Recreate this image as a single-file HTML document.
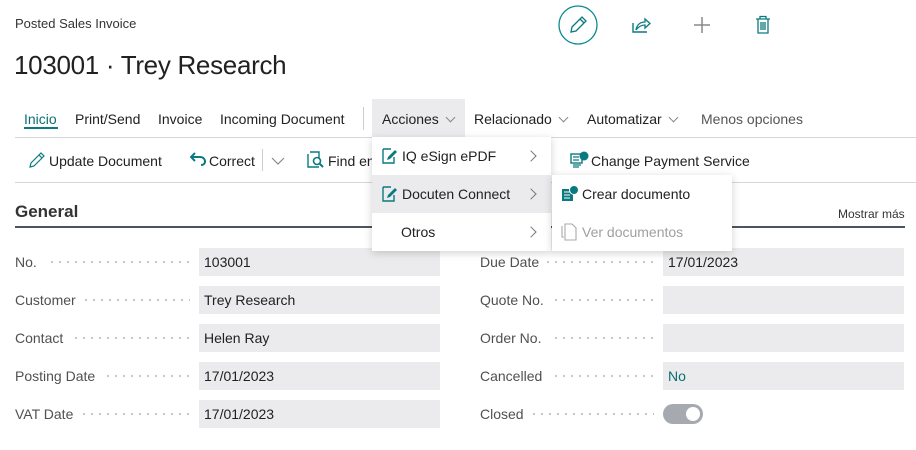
<!DOCTYPE html>
<html><head><meta charset="utf-8"><style>
*{margin:0;padding:0;box-sizing:border-box}
body{width:916px;height:450px;background:#fff;font-family:"Segoe UI","Liberation Sans",sans-serif;color:#212121;position:relative;overflow:hidden;font-size:14px}
.a{position:absolute;white-space:nowrap}
.lbl{position:absolute;color:#505050;font-size:14px;display:flex;align-items:center;height:28px}
.dots{position:absolute;height:28px;background:radial-gradient(circle,#bbb 0.8px,transparent 1.2px) 0 50%/8px 8px repeat-x}
.box{position:absolute;background:#ebebed;height:28px;padding-left:5px;display:flex;align-items:center;font-size:14px;color:#212121}
.menu{position:absolute;background:#fff;box-shadow:0 2px 8px rgba(0,0,0,.18);}
.mi{position:absolute;left:0;right:0;height:38px;display:flex;align-items:center;font-size:14px}
.chev{position:absolute;right:16px;top:15px;width:8px;height:8px;border-right:1.2px solid #777;border-top:1.2px solid #777;transform:rotate(45deg)}
.dd{display:inline-block;width:7px;height:7px;border-right:1.2px solid #888;border-bottom:1.2px solid #888;transform:rotate(45deg);margin-left:8px;position:relative;top:-3px}
</style></head><body>
<div class="a" style="left:15px;top:16px;font-size:13px;color:#333">Posted Sales Invoice</div>
<div class="a" style="left:14px;top:50px;font-size:26px;color:#212121;font-weight:300;letter-spacing:-0.3px">103001 · Trey Research</div>

<svg class="a" style="left:558px;top:5px" width="40" height="40"><circle cx="20" cy="20" r="19" fill="none" stroke="#0a8a8f" stroke-width="1.3"/><path d="M13 27 L14 22 L24 12 L28 16 L18 26 Z M22 14 L26 18" fill="none" stroke="#0a7a80" stroke-width="1.3"/></svg>
<svg class="a" style="left:631px;top:15px" width="20" height="20"><path d="M2 8 V17 H16" fill="none" stroke="#0a7a80" stroke-width="1.4"/><path d="M5 15 C6 9 10 7 14 7 V4 L19 8.5 L14 13 V10 C11 10 8 11 5 15Z" fill="none" stroke="#0a7a80" stroke-width="1.3"/></svg>
<svg class="a" style="left:693px;top:16px" width="18" height="18"><path d="M9 1V17M1 9H17" stroke="#888" stroke-width="1.5"/></svg>
<svg class="a" style="left:755px;top:15px" width="16" height="20"><path d="M1 4H15M5 4V1.5H11V4M3 4V18H13V4M6 7V15M8 7V15M10 7V15" fill="none" stroke="#0a7a80" stroke-width="1.3"/></svg>

<div class="a" style="left:24px;top:111px;font-size:14px;color:#0a6e74">Inicio</div>
<div class="a" style="left:24px;top:127px;width:34px;height:2px;background:#0a7a80"></div>
<div class="a" style="left:75px;top:111px">Print/Send</div>
<div class="a" style="left:158px;top:111px">Invoice</div>
<div class="a" style="left:220px;top:111px">Incoming Document</div>
<div class="a" style="left:363px;top:107px;width:1px;height:23px;background:#ccc"></div>
<div class="a" style="left:372px;top:99px;width:93px;height:38px;background:#ebebed"></div>
<div class="a" style="left:382px;top:111px">Acciones<span class="dd"></span></div>
<div class="a" style="left:474px;top:111px">Relacionado<span class="dd"></span></div>
<div class="a" style="left:587px;top:111px">Automatizar<span class="dd"></span></div>
<div class="a" style="left:701px;top:111px;color:#555">Menos opciones</div>
<div class="a" style="left:15px;top:137px;width:901px;height:1px;background:#d6d6d6"></div>

<svg class="a" style="left:28px;top:151px" width="18" height="18"><path d="M2 16 L3 12 L13 2 L16 5 L6 15 Z M11 4 L14 7" fill="none" stroke="#0a7a80" stroke-width="1.2"/></svg>
<div class="a" style="left:49px;top:153px">Update Document</div>
<svg class="a" style="left:190px;top:152px" width="16" height="14"><path d="M5 1 L1 5 L5 9 M1 5 H10 C13 5 15 7 15 9.5 C15 12 13 13 11 13" fill="none" stroke="#0a7a80" stroke-width="2"/></svg>
<div class="a" style="left:209px;top:153px">Correct</div>
<div class="a" style="left:262px;top:149px;width:1px;height:22px;background:#ccc"></div>
<svg class="a" style="left:271px;top:157px" width="14" height="8"><path d="M1 1L7 7L13 1" fill="none" stroke="#888" stroke-width="1.2"/></svg>
<svg class="a" style="left:307px;top:151px" width="18" height="18"><path d="M1 3V16H12M3 1H12V8" fill="none" stroke="#0a7a80" stroke-width="1.4"/><circle cx="10" cy="10" r="3.5" fill="none" stroke="#0a7a80" stroke-width="1.6"/><path d="M12.5 12.5L16 16" stroke="#0a7a80" stroke-width="2"/></svg>
<div class="a" style="left:328px;top:153px">Find en</div>
<svg class="a" style="left:570px;top:151px" width="19" height="18"><rect x="1" y="3" width="11" height="9" fill="none" stroke="#0a7a80" stroke-width="1.4"/><path d="M3 6H9M3 9H9M3 14H11M3 16H9" stroke="#0a7a80" stroke-width="1.2"/><circle cx="14" cy="5" r="4.5" fill="#0a7a80"/></svg>
<div class="a" style="left:591px;top:153px">Change Payment Service</div>
<div class="a" style="left:15px;top:182px;width:901px;height:1px;background:#d6d6d6"></div>

<div class="a" style="left:15px;top:202px;font-size:17px;font-weight:bold;color:#333">General</div>
<div class="a" style="left:15px;top:226px;width:890px;height:2px;background:#4a5462"></div>
<div class="a" style="left:838px;top:207px;font-size:12px;color:#333">Mostrar más</div>

<div class="lbl" style="left:15px;top:248px">No.</div><div class="dots" style="left:48px;top:248px;width:142px"></div><div class="box" style="left:199px;top:248px;width:241px">103001</div>
<div class="lbl" style="left:15px;top:286px">Customer</div><div class="dots" style="left:82px;top:286px;width:108px"></div><div class="box" style="left:199px;top:286px;width:241px">Trey Research</div>
<div class="lbl" style="left:15px;top:324px">Contact</div><div class="dots" style="left:72px;top:324px;width:118px"></div><div class="box" style="left:199px;top:324px;width:241px">Helen Ray</div>
<div class="lbl" style="left:15px;top:362px">Posting Date</div><div class="dots" style="left:104px;top:362px;width:86px"></div><div class="box" style="left:199px;top:362px;width:241px">17/01/2023</div>
<div class="lbl" style="left:15px;top:400px">VAT Date</div><div class="dots" style="left:80px;top:400px;width:110px"></div><div class="box" style="left:199px;top:400px;width:241px">17/01/2023</div>

<div class="lbl" style="left:480px;top:248px">Due Date</div><div class="dots" style="left:544px;top:248px;width:110px"></div><div class="box" style="left:663px;top:248px;width:241px">17/01/2023</div>
<div class="lbl" style="left:480px;top:286px">Quote No.</div><div class="dots" style="left:552px;top:286px;width:102px"></div><div class="box" style="left:663px;top:286px;width:241px"></div>
<div class="lbl" style="left:480px;top:324px">Order No.</div><div class="dots" style="left:552px;top:324px;width:102px"></div><div class="box" style="left:663px;top:324px;width:241px"></div>
<div class="lbl" style="left:480px;top:362px">Cancelled</div><div class="dots" style="left:552px;top:362px;width:102px"></div><div class="box" style="left:663px;top:362px;width:241px;color:#0a6e74">No</div>
<div class="lbl" style="left:480px;top:400px">Closed</div><div class="dots" style="left:530px;top:400px;width:124px"></div>
<div class="a" style="left:663px;top:404px;width:40px;height:20px;border-radius:10px;background:#a6aab0"></div>
<div class="a" style="left:686px;top:407px;width:14px;height:14px;border-radius:7px;background:#fff"></div>

<div class="menu" style="left:372px;top:137px;width:179px;height:114px">
 <div class="mi" style="top:0"><svg style="margin-left:9px" width="18" height="18"><path d="M2 2H10M2 2V16H13V10" fill="none" stroke="#0a7a80" stroke-width="1.4"/><path d="M6 13L7 10L14 3L16 5L9 12Z" fill="#0a7a80"/></svg><span style="margin-left:3px">IQ eSign ePDF</span><i class="chev"></i></div>
 <div class="mi" style="top:38px;background:#ebebed"><svg style="margin-left:9px" width="18" height="18"><path d="M2 2H10M2 2V16H13V10" fill="none" stroke="#0a7a80" stroke-width="1.4"/><path d="M6 13L7 10L14 3L16 5L9 12Z" fill="#0a7a80"/></svg><span style="margin-left:3px">Docuten Connect</span><i class="chev"></i></div>
 <div class="mi" style="top:76px"><span style="margin-left:29px">Otros</span><i class="chev"></i></div>
</div>
<div class="menu" style="left:552px;top:175px;width:180px;height:76px">
 <div class="mi" style="top:0"><svg style="margin-left:9px" width="18" height="18"><rect x="1" y="4" width="11" height="12" fill="#0a7a80"/><path d="M3 7H9M3 10H9M3 13H9" stroke="#fff" stroke-width="1"/><circle cx="13" cy="5" r="4.5" fill="#0a7a80" stroke="#fff"/></svg><span style="margin-left:3px">Crear documento</span></div>
 <div class="mi" style="top:38px;color:#a0a0a0"><svg style="margin-left:9px" width="18" height="18"><path d="M1 3V14H3M4 1H11L15 5V17H4Z" fill="none" stroke="#aaa" stroke-width="1.1"/></svg><span style="margin-left:3px">Ver documentos</span></div>
</div>
</body></html>
